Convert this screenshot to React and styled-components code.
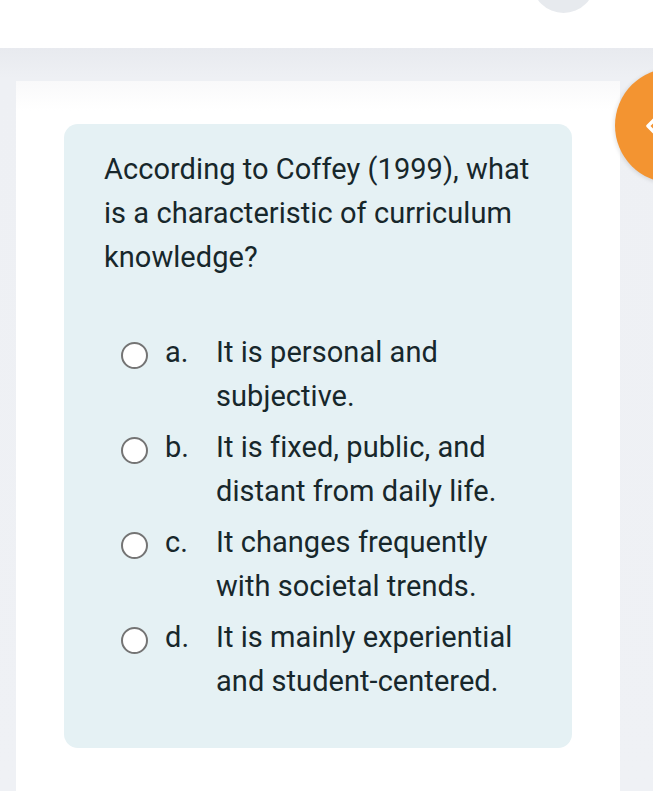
import React from "react";
import styled, { createGlobalStyle } from "styled-components";

const Global = createGlobalStyle`
  html, body { margin: 0; padding: 0; background: #eff1f5; }
  body { font-family: Roboto, "Noto Sans", Arial, sans-serif; overflow: hidden; }
  * { box-sizing: border-box; }
`;

const Page = styled.div`
  position: relative;
  width: 653px;
  height: 791px;
  overflow: hidden;
  display: flex;
  flex-direction: column;
`;

const TopBar = styled.header`
  position: relative;
  height: 48px;
  background: #ffffff;
  flex-shrink: 0;
`;

const Avatar = styled.div`
  position: absolute;
  left: 532px;
  top: -50px;
  width: 63px;
  height: 63px;
  border-radius: 50%;
  background: #e7eaee;
`;

const Band = styled.main`
  flex: 1;
  padding: 33px 33px 0 16px;
  background: linear-gradient(#e8eaef 0px, #eef0f4 30px, #eff1f5 100%);
`;

const Card = styled.section`
  height: 100%;
  background: linear-gradient(#f9f9fa 0px, #ffffff 30px);
  padding: 43px 48px 0 48px;
`;

const QuestionBox = styled.div`
  background: #e5f1f4;
  border-radius: 14px;
  padding: 23px 30px 45px 40px;
  color: #17272b;
  font-size: 29px;
  letter-spacing: 0.05px;
  line-height: 44px;
`;

const Question = styled.div`
  margin-bottom: 51px;
  white-space: nowrap;
`;

const Options = styled.div`
  display: flex;
  flex-direction: column;
  gap: 7px;
`;

const Option = styled.label`
  display: flex;
  align-items: flex-start;
  padding-left: 17px;
  white-space: nowrap;
`;

const Radio = styled.span`
  width: 27px;
  height: 27px;
  border: 2px solid #747474;
  border-radius: 50%;
  background: #ffffff;
  margin-top: 12px;
  flex-shrink: 0;
`;

const Letter = styled.span`
  width: 51px;
  margin-left: 17px;
  flex-shrink: 0;
`;

const OptionText = styled.span``;

const SideButton = styled.button`
  position: absolute;
  left: 615px;
  top: 68px;
  width: 115px;
  height: 115px;
  border-radius: 50%;
  border: none;
  padding: 0 0 0 25px;
  background: #f39431;
  box-shadow: -1px 1px 4px rgba(0, 0, 0, 0.12);
  display: flex;
  align-items: center;
  cursor: pointer;
`;

const options = [
  ["a.", ["It is personal and", "subjective."]],
  ["b.", ["It is fixed, public, and", "distant from daily life."]],
  ["c.", ["It changes frequently", "with societal trends."]],
  ["d.", ["It is mainly experiential", "and student-centered."]],
];

export default function App() {
  return (
    <>
      <Global />
      <Page>
        <TopBar>
          <Avatar />
        </TopBar>
        <Band>
          <Card>
            <QuestionBox>
              <Question>
                According to Coffey (1999), what
                <br />
                is a characteristic of curriculum
                <br />
                knowledge?
              </Question>
              <Options>
                {options.map(([l, lines]) => (
                  <Option key={l}>
                    <Radio />
                    <Letter>{l}</Letter>
                    <OptionText>
                      {lines[0]}
                      <br />
                      {lines[1]}
                    </OptionText>
                  </Option>
                ))}
              </Options>
            </QuestionBox>
          </Card>
        </Band>
        <SideButton aria-label="back">
          <svg width="24" height="24" viewBox="0 0 24 24">
            <path d="M15 5 L8 12 L15 19" fill="none" stroke="#fff" strokeWidth="3.5" strokeLinecap="round" strokeLinejoin="round" />
          </svg>
        </SideButton>
      </Page>
    </>
  );
}
